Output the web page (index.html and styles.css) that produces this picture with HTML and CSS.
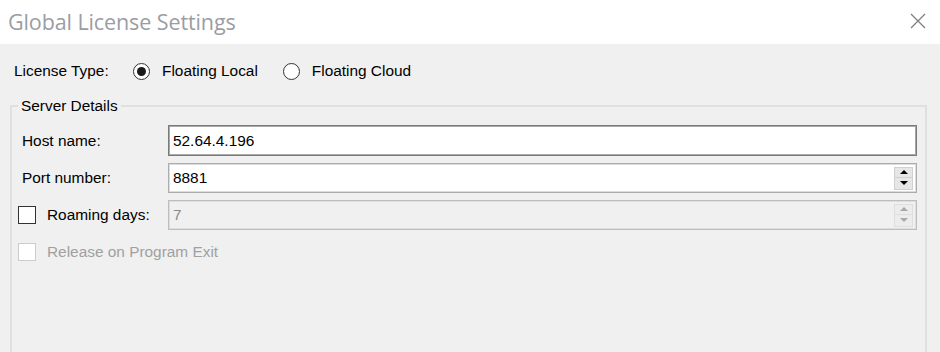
FILE: index.html
```html
<!DOCTYPE html>
<html>
<head>
<meta charset="utf-8">
<link rel="stylesheet" href="styles.css">
</head>
<body>
<div class="dialog">
  <div class="titlebar">
    <span class="title">Global License Settings</span>
    <svg class="close" width="16" height="16" viewBox="0 0 16 16"><path d="M1 1L15 15M15 1L1 15" stroke="#7f7f7f" stroke-width="1.3" fill="none"/></svg>
  </div>
  <div class="content">
    <div class="license-row">
      <span class="lt-label">License Type:</span>
      <span class="radio checked"><span class="dot"></span></span>
      <span class="opt">Floating Local</span>
      <span class="radio"></span>
      <span class="opt">Floating Cloud</span>
    </div>
    <fieldset class="group">
      <legend>Server Details</legend>
      <div class="grid">
        <span class="lbl">Host name:</span>
        <div class="field host"><span class="val">52.64.4.196</span></div>
        <span class="lbl">Port number:</span>
        <div class="field port"><span class="val">8881</span>
          <div class="spin"><span class="btn"><span class="up"></span></span><span class="btn"><span class="down"></span></span></div>
        </div>
        <span class="chk-lbl"><span class="check"></span>Roaming days:</span>
        <div class="field disabled"><span class="val">7</span>
          <div class="spin"><span class="btn"><span class="up"></span></span><span class="btn"><span class="down"></span></span></div>
        </div>
      </div>
      <div class="release"><span class="check dis"></span>Release on Program Exit</div>
    </fieldset>
  </div>
</div>
</body>
</html>
```
FILE: styles.css
```css
html, body { margin: 0; padding: 0; }
body {
  width: 940px; height: 352px; overflow: hidden;
  background: #f0f0f0;
  font-family: "Liberation Sans", Arial, sans-serif;
  font-size: 15.4px;
  color: #000;
}
.dialog { height: 352px; display: flex; flex-direction: column; overflow: hidden; }
.titlebar {
  flex: 0 0 44px;
  height: 44px; background: #fff;
  display: flex; align-items: center; justify-content: space-between;
  padding: 0 14px 0 8px;
  box-sizing: border-box;
}
.title {
  font-family: "Open Sans", "Noto Sans", sans-serif;
  font-size: 21.5px; color: #9a9da3;
  letter-spacing: -0.1px;
  margin-top: -2px;
}
.close { margin-top: -2px; }
.content { flex: 1 0 auto; background: #f0f0f0; }
.license-row {
  display: flex; align-items: center;
  height: 20px; margin-top: 17px; padding-left: 14px;
}
.lt-label { width: 119px; }
.radio {
  width: 17px; height: 17px; box-sizing: border-box;
  border: 1px solid #333; border-radius: 50%; background: #fff;
  display: flex; align-items: center; justify-content: center;
  margin-right: 12px;
}
.radio .dot { width: 9px; height: 9px; border-radius: 50%; background: #1a1a1a; }
.opt { margin-right: 25px; }
.group {
  margin: 16px 13px 0 10px;
  border: 2px solid #e0e0e0;
  padding: 10px 8px 0 6px;
  height: 300px;
}
.group legend { padding: 0 3px; line-height: 18px; }
.grid {
  display: grid;
  grid-template-columns: 150px 1fr;
  row-gap: 7px;
  align-items: center;
}
.lbl { padding-left: 4px; }
.chk-lbl { display: flex; align-items: center; }
.check {
  width: 18px; height: 18px; box-sizing: border-box;
  border: 1px solid #333; background: #fff;
  margin-right: 11px;
}
.check.dis { border-color: #cccccc; }
.field {
  height: 30px; box-sizing: border-box;
  background: #fff;
  display: flex; align-items: center;
  padding-left: 4px;
}
.field .val { flex: 1; }
.host { height: 31px; border: 1px solid #7a7a7a; box-shadow: inset 0 0 0 1px #a8a8a8; }
.port { border: 1px solid #adadad; box-shadow: inset 0 0 0 1px #dcdcdc; padding-right: 3px; }
.disabled { border: 1px solid #bdbdbd; box-shadow: inset 0 0 0 1px #dedede; background: #f0f0f0; color: #8a8a8a; padding-right: 3px; }
.spin { display: flex; flex-direction: column; width: 19px; }
.btn {
  height: 11px; box-sizing: border-box;
  background: #e6e6e6; border: 1px solid #d0d0d0;
  display: flex; align-items: center; justify-content: center;
}
.btn + .btn { border-top: none; height: 12px; }
.up { width: 0; height: 0; border-left: 4px solid transparent; border-right: 4px solid transparent; border-bottom: 4px solid #000; }
.down { width: 0; height: 0; border-left: 4px solid transparent; border-right: 4px solid transparent; border-top: 4px solid #000; }
.disabled .btn { background: #ececec; border-color: #dedede; }
.disabled .up { border-bottom-color: #a8a8a8; }
.disabled .down { border-top-color: #a8a8a8; }
.release {
  display: flex; align-items: center;
  margin-top: 13px; color: #a0a0a0;
}
```
